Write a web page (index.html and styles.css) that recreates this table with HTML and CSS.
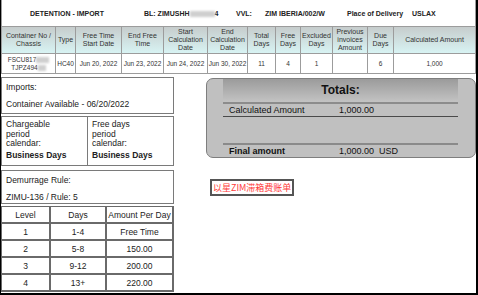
FILE: index.html
```html
<!DOCTYPE html>
<html>
<head>
<meta charset="utf-8">
<link rel="stylesheet" href="styles.css">
</head>
<body>
<div class="page">
  <table class="grid">
    <colgroup>
      <col class="c1"><col class="c2"><col class="c3"><col class="c4"><col class="c5"><col class="c6">
      <col class="c7"><col class="c8"><col class="c9"><col class="c10"><col class="c11"><col class="c12">
    </colgroup>
    <tr class="title-row">
      <td colspan="12">
        <div class="title">
          <span class="t-doc">DETENTION - IMPORT</span>
          <span class="t-bl">BL: ZIMUSHH<span class="blur b-bl"></span>4</span>
          <span class="t-vvl">VVL:</span>
          <span class="t-vessel">ZIM IBERIA/002/W</span>
          <span class="t-pod">Place of Delivery</span>
          <span class="t-usl">USLAX</span>
        </div>
      </td>
    </tr>
    <tr class="head-row">
      <th>Container No / Chassis</th>
      <th>Type</th>
      <th>Free Time Start Date</th>
      <th>End Free Time</th>
      <th>Start Calculation Date</th>
      <th>End Calculation Date</th>
      <th>Total Days</th>
      <th>Free Days</th>
      <th>Excluded Days</th>
      <th>Previous invoices Amount</th>
      <th>Due Days</th>
      <th>Calculated Amount</th>
    </tr>
    <tr class="data-row">
      <td class="cntr">
        <div>FSCU817<span class="blur b-c1"></span></div>
        <div>TJPZ494<span class="blur b-c2"></span></div>
      </td>
      <td>HC40</td>
      <td>Jun 20, 2022</td>
      <td>Jun 23, 2022</td>
      <td>Jun 24, 2022</td>
      <td>Jun 30, 2022</td>
      <td>11</td>
      <td>4</td>
      <td>1</td>
      <td></td>
      <td>6</td>
      <td>1,000</td>
    </tr>
  </table>

  <div class="lower">
    <div class="left">
      <div class="box imports">
        <div>Imports:</div>
        <div>Container Available - 06/20/2022</div>
      </div>
      <div class="box calendars">
        <div class="cal">
          <div>Chargeable</div>
          <div>period</div>
          <div>calendar:</div>
          <div class="strong">Business Days</div>
        </div>
        <div class="cal">
          <div>Free days</div>
          <div>period</div>
          <div>calendar:</div>
          <div class="strong">Business Days</div>
        </div>
      </div>
      <div class="box rule">
        <div>Demurrage Rule:</div>
        <div>ZIMU-136 / Rule: 5</div>
      </div>
      <table class="levels">
        <tr><th>Level</th><th>Days</th><th>Amount Per Day</th></tr>
        <tr><td>1</td><td>1-4</td><td>Free Time</td></tr>
        <tr><td>2</td><td>5-8</td><td>150.00</td></tr>
        <tr><td>3</td><td>9-12</td><td>200.00</td></tr>
        <tr><td>4</td><td>13+</td><td>220.00</td></tr>
      </table>
    </div>

    <div class="right">
      <div class="totals">
        <div class="totals-inner">
          <div class="band">Totals:</div>
          <div class="trow calc"><span class="lbl">Calculated Amount</span><span class="val">1,000.00</span></div>
          <div class="spacer"></div>
          <div class="trow final"><span class="lbl">Final amount</span><span class="val">1,000.00&nbsp;&nbsp;USD</span></div>
        </div>
      </div>
      <div class="stamp">以星ZIM滞箱费账单</div>
    </div>
  </div>
</div>
</body>
</html>
```

FILE: styles.css
```css
* { box-sizing: border-box; }
html, body { margin: 0; padding: 0; background: #fff; }
body {
  font-family: "Liberation Sans", Arial, sans-serif;
  color: #222;
}
.page {
  width: 478px;
  height: 295px;
  border-left: 1px solid #000;
  border-right: 2px solid #000;
  border-bottom: 2px solid #000;
  overflow: hidden;
}

/* top grid */
.grid {
  border-collapse: separate;
  border-spacing: 0;
  table-layout: fixed;
  width: 475px;
  border-left: 1px solid #9c9c9c;
}
.c1 { width: 54px; } .c2 { width: 20px; } .c3 { width: 46px; } .c4 { width: 42px; }
.c5 { width: 44px; } .c6 { width: 40px; } .c7 { width: 28px; } .c8 { width: 25px; }
.c9 { width: 32px; } .c10 { width: 35px; } .c11 { width: 26px; } .c12 { width: 82px; }

.grid td, .grid th {
  border-right: 1px solid #9c9c9c;
  border-bottom: 1px solid #9c9c9c;
  padding: 0;
  text-align: center;
  vertical-align: middle;
  overflow: hidden;
}
.title-row td { height: 27px; }
.title {
  display: flex;
  align-items: center;
  font-size: 7px;
  font-weight: bold;
  color: #222;
  white-space: nowrap;
}
.t-doc { width: 130px; text-align: center; }
.t-bl { margin-left: 12px; width: 92px; text-align: left; }
.t-vvl { width: 29px; text-align: left; }
.t-vessel { width: 82px; text-align: left; }
.t-pod { width: 65px; text-align: left; }
.t-usl { text-align: left; }

.blur {
  display: inline-block;
  height: 6px;
  background: #cfcfcf;
  filter: blur(1px);
  vertical-align: -1px;
}
.b-bl { width: 25px; }
.b-c1 { width: 13px; }
.b-c2 { width: 8px; }

.head-row th {
  height: 27px;
  font-size: 7px;
  line-height: 8px;
  font-weight: normal;
  color: #333;
  background: linear-gradient(#c6cccc, #d8f3f3);
}
.data-row td {
  height: 20px;
  font-size: 6.5px;
  line-height: 8px;
  color: #333;
}
.cntr div { line-height: 8px; }

/* lower */
.lower {
  display: flex;
  margin-top: 3px;
}
.left {
  width: 173px;
  display: flex;
  flex-direction: column;
}
.box {
  border: 1px solid #7a7a7a;
  font-size: 8.5px;
  color: #222;
}
.imports {
  height: 37px;
  padding: 1px 4px 0;
  line-height: 17px;
}
.calendars {
  margin-top: 2px;
  height: 50px;
  display: flex;
}
.cal {
  flex: 1;
  padding: 3px 4px 0;
  line-height: 9.5px;
}
.cal + .cal { border-left: 1px solid #7a7a7a; }
.cal .strong {
  font-weight: bold;
  line-height: 13px;
}
.rule {
  margin-top: 4px;
  height: 34px;
  padding: 1px 4px 0;
  line-height: 17px;
}
.levels {
  margin-top: 2px;
  width: 173px;
  border-collapse: separate;
  border-spacing: 0;
  table-layout: fixed;
  border-top: 1px solid #6a6a6a;
  border-left: 1px solid #6a6a6a;
  font-size: 8.5px;
  color: #222;
}
.levels th, .levels td {
  border-right: 2px solid #6a6a6a;
  border-bottom: 2px solid #6a6a6a;
  height: 17px;
  padding: 0;
  text-align: center;
  font-weight: normal;
  white-space: nowrap;
}
.levels th:nth-child(1), .levels td:nth-child(1) { width: 49px; }
.levels th:nth-child(2), .levels td:nth-child(2) { width: 56px; }

.right {
  flex: 1;
  display: flex;
  flex-direction: column;
  align-items: flex-start;
}
.totals {
  margin-left: 32px;
  margin-top: 1px;
  width: 270px;
  height: 80px;
  background: #c0c0c0;
  border: 1px solid #7e7e7e;
  border-radius: 7px;
  padding: 0 17px 0 16px;
}
.totals-inner {
  display: flex;
  flex-direction: column;
  height: 100%;
}
.band {
  height: 25px;
  background: linear-gradient(#9b9b9b, #c3c3c3);
  border-bottom: 2px solid #8c8c8c;
  font-size: 12px;
  font-weight: bold;
  text-align: center;
  line-height: 23px;
  color: #111;
}
.trow {
  display: flex;
  font-size: 9px;
  color: #111;
  padding-left: 6px;
}
.trow .lbl { width: 110px; }
.calc {
  height: 13px;
  line-height: 12px;
  border-bottom: 1px solid #4a4a4a;
}
.spacer { flex: 1; }
.final {
  border-top: 2px solid #8a8a8a;
  height: 14px;
  line-height: 13px;
}
.final .lbl { font-weight: bold; }

.stamp {
  margin-left: 36px;
  margin-top: 21px;
  border: 2px solid #555;
  background: #fff;
  color: #ff3b3b;
  font-family: "Noto Sans CJK SC", "Liberation Sans", sans-serif;
  font-size: 9px;
  line-height: 13px;
  padding: 0 1px;
  white-space: nowrap;
}
```
